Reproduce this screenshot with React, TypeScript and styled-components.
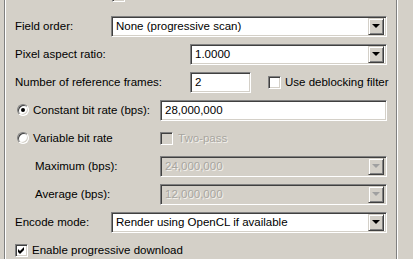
import styled, { createGlobalStyle, css } from "styled-components";

const GlobalStyle = createGlobalStyle`
  body {
    margin: 0;
    background: #d4d0c8;
    font-family: "Liberation Sans", Arial, sans-serif;
    font-size: 11.5px;
    color: #000;
  }
`;

const sunken = css`
  box-sizing: border-box;
  border: 1px solid;
  border-color: #808080 #ffffff #ffffff #808080;
  box-shadow: inset 1px 1px #404040, inset -1px -1px #d4d0c8;
`;

const Page = styled.div`
  width: 413px;
  height: 259px;
  overflow: hidden;
  background: #d4d0c8;
`;

const Group = styled.div`
  box-sizing: border-box;
  margin-left: 4px;
  width: 394px;
  height: 259px;
  border-left: 1px solid #808080;
  border-right: 1px solid #ffffff;
  box-shadow: inset 1px 0 #ffffff, inset -1px 0 #808080;
  padding-left: 10px;
  display: flex;
  flex-direction: column;
  gap: 8px;
`;

const Row = styled.div<{ $indent?: number }>`
  display: flex;
  align-items: center;
  height: 20px;
  flex-shrink: 0;
  padding-left: ${(p) => p.$indent ?? 0}px;
`;

const TopRow = styled(Row)`
  height: 13px;
  margin-top: -11px;
  margin-bottom: 6px;
  padding-left: 97px;
`;

const Label = styled.span<{ $width?: number; $disabled?: boolean }>`
  width: ${(p) => (p.$width ? `${p.$width}px` : "auto")};
  flex-shrink: 0;
  white-space: nowrap;
  color: ${(p) => (p.$disabled ? "#a8a6a0" : "#000")};
  text-shadow: ${(p) => (p.$disabled ? "1px 1px #f4f2ee" : "none")};
`;

const Field = styled.div<{ $width: number; $disabled?: boolean }>`
  ${sunken};
  width: ${(p) => p.$width}px;
  height: 21px;
  display: flex;
  align-items: center;
  padding: 2px 2px 2px 4px;
  background: ${(p) => (p.$disabled ? "#d4d0c8" : "#ffffff")};
  color: ${(p) => (p.$disabled ? "#a8a6a0" : "#000")};
  text-shadow: ${(p) => (p.$disabled ? "1px 1px #f4f2ee" : "none")};
`;

const FieldText = styled.span`
  flex: 1;
  white-space: nowrap;
  overflow: hidden;
`;

const DropButton = styled.span<{ $disabled?: boolean }>`
  box-sizing: border-box;
  width: 16px;
  height: 17px;
  flex-shrink: 0;
  display: flex;
  align-items: center;
  justify-content: center;
  background: #d4d0c8;
  border: 1px solid;
  border-color: #d4d0c8 #404040 #404040 #d4d0c8;
  box-shadow: inset 1px 1px #ffffff, inset -1px -1px #808080;

  &::after {
    content: "";
    width: 0;
    height: 0;
    border-left: 4px solid transparent;
    border-right: 4px solid transparent;
    border-top: 4px solid ${(p) => (p.$disabled ? "#a0a0a0" : "#000")};
  }
`;

const Radio = styled.span<{ $checked?: boolean }>`
  ${sunken};
  width: 12px;
  height: 12px;
  border-radius: 50%;
  background: #ffffff;
  margin-left: 2px;
  margin-right: 4px;
  flex-shrink: 0;
  display: flex;
  align-items: center;
  justify-content: center;

  &::after {
    content: "";
    width: 4px;
    height: 4px;
    border-radius: 50%;
    background: #000;
    display: ${(p) => (p.$checked ? "block" : "none")};
  }
`;

const Box = styled.span<{ $disabled?: boolean; $gap?: number }>`
  ${sunken};
  width: 13px;
  height: 13px;
  flex-shrink: 0;
  margin-right: ${(p) => p.$gap ?? 4}px;
  background: ${(p) => (p.$disabled ? "#d4d0c8" : "#ffffff")};
  display: flex;
  align-items: center;
  justify-content: center;
`;

const Spacer = styled.span<{ $width: number }>`
  width: ${(p) => p.$width}px;
  flex-shrink: 0;
`;

function Select({
  width,
  value,
  disabled,
}: {
  width: number;
  value: string;
  disabled?: boolean;
}) {
  return (
    <Field $width={width} $disabled={disabled}>
      <FieldText>{value}</FieldText>
      <DropButton $disabled={disabled} />
    </Field>
  );
}

function Check({
  checked,
  disabled,
  gap,
}: {
  checked?: boolean;
  disabled?: boolean;
  gap?: number;
}) {
  return (
    <Box $disabled={disabled} $gap={gap}>
      {checked && (
        <svg width="7" height="7" viewBox="0 0 7 7">
          <path
            d="M0 2 L2 4 L6 0 L6 3 L2 7 L0 5 Z"
            fill={disabled ? "#808080" : "#000"}
          />
        </svg>
      )}
    </Box>
  );
}

export default function App() {
  return (
    <Page>
      <GlobalStyle />
      <Group>
        <TopRow>
          <Check />
          <Label>Use hardware acceleration if available</Label>
        </TopRow>

        <Row>
          <Label $width={96}>Field order:</Label>
          <Select width={276} value="None (progressive scan)" />
        </Row>

        <Row>
          <Label $width={175}>Pixel aspect ratio:</Label>
          <Select width={197} value="1.0000" />
        </Row>

        <Row>
          <Label $width={175}>Number of reference frames:</Label>
          <Field $width={61}>
            <FieldText>2</FieldText>
          </Field>
          <Spacer $width={17} />
          <Check />
          <Label>Use deblocking filter</Label>
        </Row>

        <Row>
          <Radio $checked />
          <Label $width={127}>Constant bit rate (bps):</Label>
          <Field $width={227}>
            <FieldText>28,000,000</FieldText>
          </Field>
        </Row>

        <Row>
          <Radio />
          <Label $width={127}>Variable bit rate</Label>
          <Check disabled gap={5} />
          <Label $disabled>Two-pass</Label>
        </Row>

        <Row $indent={20}>
          <Label $width={125}>Maximum (bps):</Label>
          <Select width={227} value="24,000,000" disabled />
        </Row>

        <Row $indent={20}>
          <Label $width={125}>Average (bps):</Label>
          <Select width={227} value="12,000,000" disabled />
        </Row>

        <Row>
          <Label $width={96}>Encode mode:</Label>
          <Select width={276} value="Render using OpenCL if available" />
        </Row>

        <Row>
          <Check checked />
          <Label>Enable progressive download</Label>
        </Row>
      </Group>
    </Page>
  );
}
